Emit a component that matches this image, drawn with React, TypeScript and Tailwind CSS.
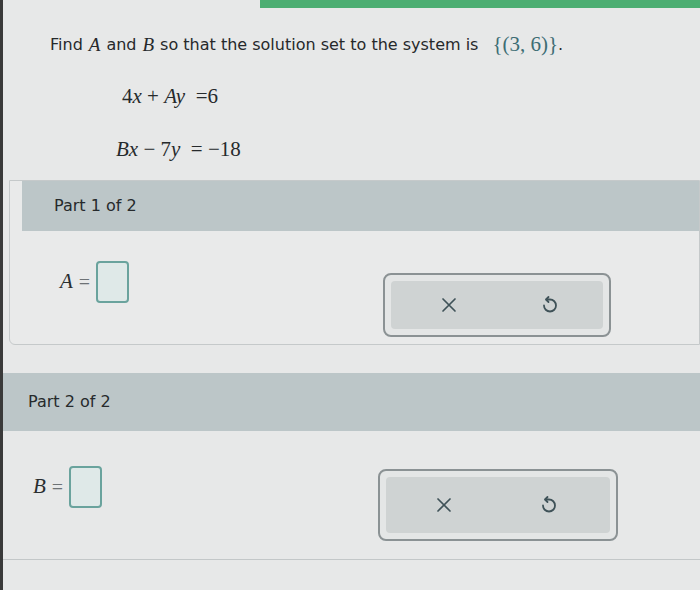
import React from 'react';

const serif = { fontFamily: '"Liberation Serif", "Times New Roman", serif' };

const RedoIcon: React.FC = () => (
    <svg width="24" height="24" viewBox="0 0 24 24" fill="none" stroke="#3f5258" strokeWidth="1.8" strokeLinecap="round" strokeLinejoin="round">
        <path d="M9.5 6.5h3.5a6 6 0 1 1 -6 6" />
        <path d="M11.5 4l-2.5 2.5 2.5 2.5" />
    </svg>
);

const XIcon: React.FC = () => (
    <svg width="20" height="20" viewBox="0 0 20 20" fill="none" stroke="#3f5258" strokeWidth="1.7" strokeLinecap="round">
        <path d="M4 4l12 12M16 4L4 16" />
    </svg>
);

const ActionBox: React.FC<{ width: string; height: string; pad: string }> = ({ width, height, pad }) => (
    <div className={`${width} ${height} rounded-lg border-2 border-[#8b9294] bg-[#e4e6e6] p-[6px]`}>
        <div className={`h-full w-full rounded-sm bg-[#cfd3d3] flex items-center justify-between ${pad}`}>
            <XIcon />
            <RedoIcon />
        </div>
    </div>
);

const AnswerBox: React.FC = () => (
    <span className="inline-block w-[33px] h-[42px] rounded-[4px] border-2 border-[#6aa39d] bg-[#dfe9e8]" />
);

const Part: React.FC<{
    label: string;
    variable: string;
    outer: string;
    header: string;
    bodyPad: string;
    inputTop: string;
    box: { width: string; height: string; pad: string };
    boxPad: string;
}> = ({ label, variable, outer, header, bodyPad, inputTop, box, boxPad }) => (
    <div className={outer}>
        <div className={`bg-[#bcc6c8] flex items-center ${header}`}>
            <span className="text-[16px] text-[#262a2c]">{label}</span>
        </div>
        <div className={`flex items-start justify-between ${bodyPad}`}>
            <div className={`flex items-center gap-[6px] ${inputTop}`}>
                <span className="text-[21px] italic text-[#2a2e30]" style={serif}>
                    {variable}
                </span>
                <span className="text-[20px] text-[#6d7275]" style={serif}>=</span>
                <AnswerBox />
            </div>
            <div className={boxPad}>
                <ActionBox {...box} />
            </div>
        </div>
    </div>
);

const App: React.FC = () => {
    return (
        <div
            className="w-[700px] h-[590px] overflow-hidden bg-[#e7e8e8] border-l-[3px] border-[#3a3a3a] flex flex-col"
            style={{ fontFamily: '"DejaVu Sans", Verdana, sans-serif' }}
        >
            <div className="flex justify-end">
                <div className="w-[440px] h-[8px] bg-[#4cae72]" />
            </div>

            <p className="ml-[47px] mt-[21px] text-[16px] text-[#26292b] flex items-center gap-[6px]">
                Find <i className="text-[19px]" style={serif}>A</i> and <i className="text-[19px]" style={serif}>B</i> so that the solution set to the system is
                <span className="text-[21px] text-[#3d6d74] ml-[8px]" style={serif}>{'{(3, 6)}'}</span>
                <span className="-ml-[6px]">.</span>
            </p>

            <div className="ml-[119px] mt-[20px] flex flex-col gap-[22px] text-[21px] text-[#262a2c]" style={serif}>
                <div className="whitespace-pre">
                    4<i>x</i> + <i>Ay</i>  =6
                </div>
                <div className="-ml-[6px] whitespace-pre">
                    <i>Bx</i> − 7<i>y</i>  = −18
                </div>
            </div>

            <Part
                label="Part 1 of 2"
                variable="A"
                outer="mt-[14px] ml-[6px] h-[165px] border border-[#c5c9ca] rounded-bl-md bg-[#e9eaea]"
                header="h-[50px] pl-[32px] ml-[12px]"
                bodyPad="pl-[50px] pr-[88px]"
                inputTop="mt-[30px]"
                box={{ width: 'w-[228px]', height: 'h-[64px]', pad: 'pl-[48px] pr-[42px]' }}
                boxPad="mt-[42px]"
            />

            <Part
                label="Part 2 of 2"
                variable="B"
                outer="mt-[28px] h-[187px] border-b border-[#c3c7c8]"
                header="h-[58px] pl-[25px]"
                bodyPad="pl-[30px] pr-[82px]"
                inputTop="mt-[35px]"
                box={{ width: 'w-[240px]', height: 'h-[72px]', pad: 'pl-[48px] pr-[50px]' }}
                boxPad="mt-[38px]"
            />
        </div>
    );
};

export default App;
